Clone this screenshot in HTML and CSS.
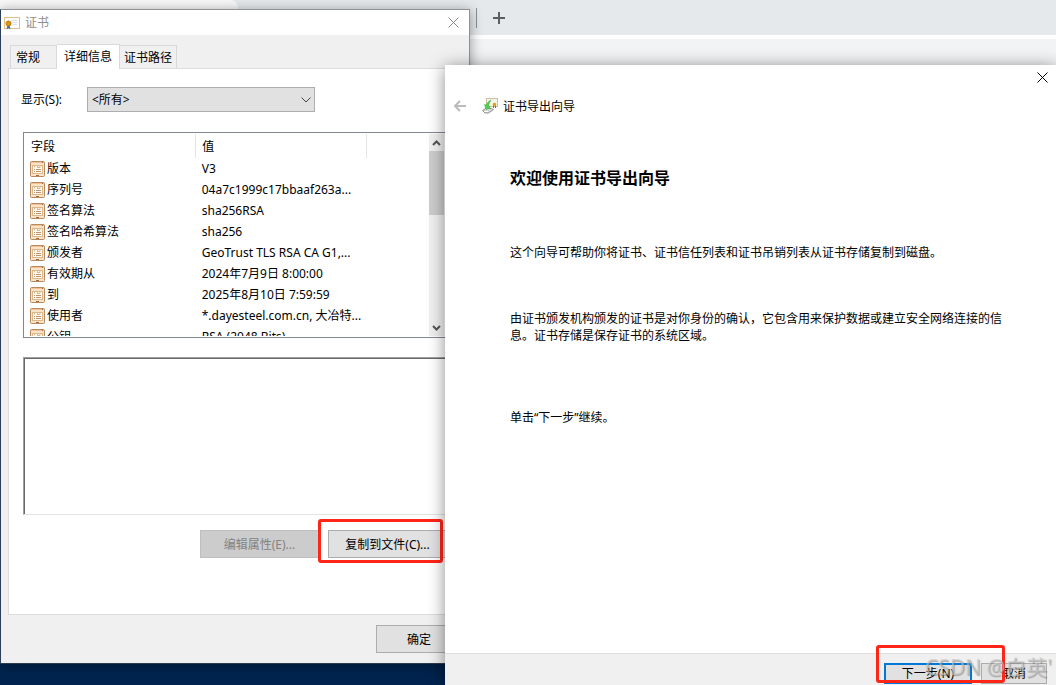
FILE: index.html
```html
<!DOCTYPE html>
<html lang="zh-CN">
<head>
    <meta charset="UTF-8">
    <meta name="viewport" content="width=device-width, initial-scale=1.0">
    <title>证书导出向导</title>
    <link rel="stylesheet" href="styles.css">
</head>
<body>
    <svg class="icon-defs" aria-hidden="true">
        <symbol id="field-icon" viewBox="0 0 15 16">
            <rect x="0.5" y="0.5" width="14" height="15" rx="1" fill="#fbe3c8" stroke="#b58a60"/>
            <path d="M1 1.5h13" stroke="#f6c096"/>
            <path d="M12 1.5h1M6 14.5h3" stroke="#a06c40"/>
            <rect x="2.5" y="4.5" width="10" height="8" fill="#fffaf3" stroke="#dbb78c"/>
            <path d="M4.5 4v2.500M7.5 4v2.500M7 6.500h3v-2" fill="none" stroke="#dbb78c"/>
            <path d="M4 8.500h1M6 8.500h5M4 10.500h1M6 10.500h5" stroke="#c09468"/>
        </symbol>
    </svg>

    <div class="desktop">
        <div class="browser">
            <div class="tab-strip">
                <div class="browser-tab"></div>
                <div class="tab-divider"></div>
                <button class="new-tab" aria-label="新标签页">
                    <svg width="12" height="12" viewBox="0 0 12 12"><path d="M6 0v12M0 6h12" stroke="#5a5f63" stroke-width="2"/></svg>
                </button>
            </div>
            <div class="toolbar"></div>
        </div>

        <!-- Certificate properties -->
        <div class="window cert-window">
            <div class="title-bar">
                <svg width="16" height="14" viewBox="0 0 16 14">
                    <rect x="0.500" y="1.500" width="15" height="11" fill="#fdfdfb" stroke="#e3bf8e"/>
                    <path d="M7 4.500h6M8 6.500h5M9 8.500h4" stroke="#dce3ec"/>
                    <path d="M3.500 9l-1 4.500 2-1.500 2 1.500-1-4.500z" fill="#2f6fd0"/>
                    <circle cx="4.500" cy="7.500" r="2.500" fill="#d99a13" stroke="#b87a08"/>
                </svg>
                <span class="title-text">证书</span>
                <button class="close" aria-label="关闭">
                    <svg width="11" height="11" viewBox="0 0 11 11"><path d="M0.500 0.500l10 10M10.500 0.500l-10 10" stroke="#8a8a8a"/></svg>
                </button>
            </div>

            <div class="tabs" role="tablist">
                <button class="tab tab-general" role="tab">常规</button>
                <button class="tab active" role="tab">详细信息</button>
                <button class="tab" role="tab">证书路径</button>
            </div>

            <div class="panel">
                <div class="filter">
                    <label for="show">显示(S):</label>
                    <div class="select-box">
                        <select id="show">
                            <option>&lt;所有&gt;</option>
                        </select>
                        <svg class="chevron" width="10" height="6" viewBox="0 0 10 6"><path d="M0.500 0.500L5 5l4.500-4.500" fill="none" stroke="#444"/></svg>
                    </div>
                </div>

                <div class="list-view">
                    <div class="list-body">
                        <table class="fields">
                            <thead>
                                <tr><th>字段</th><th>值</th></tr>
                            </thead>
                            <tbody>
                                <tr><td><svg class="field-icon"><use href="#field-icon"/></svg>版本</td><td>V3</td></tr>
                                <tr><td><svg class="field-icon"><use href="#field-icon"/></svg>序列号</td><td>04a7c1999c17bbaaf263a...</td></tr>
                                <tr><td><svg class="field-icon"><use href="#field-icon"/></svg>签名算法</td><td>sha256RSA</td></tr>
                                <tr><td><svg class="field-icon"><use href="#field-icon"/></svg>签名哈希算法</td><td>sha256</td></tr>
                                <tr><td><svg class="field-icon"><use href="#field-icon"/></svg>颁发者</td><td>GeoTrust TLS RSA CA G1,...</td></tr>
                                <tr><td><svg class="field-icon"><use href="#field-icon"/></svg>有效期从</td><td>2024年7月9日 8:00:00</td></tr>
                                <tr><td><svg class="field-icon"><use href="#field-icon"/></svg>到</td><td>2025年8月10日 7:59:59</td></tr>
                                <tr><td><svg class="field-icon"><use href="#field-icon"/></svg>使用者</td><td>*.dayesteel.com.cn, 大冶特...</td></tr>
                                <tr><td><svg class="field-icon"><use href="#field-icon"/></svg>公钥</td><td>RSA (2048 Bits)</td></tr>
                            </tbody>
                        </table>
                    </div>
                    <div class="scrollbar">
                        <svg width="9" height="6" viewBox="0 0 9 6"><path d="M1 5l3.500-3.500L8 5" fill="none" stroke="#555" stroke-width="2"/></svg>
                        <div class="track"><div class="thumb"></div></div>
                        <svg width="9" height="6" viewBox="0 0 9 6"><path d="M1 1l3.500 3.500L8 1" fill="none" stroke="#555" stroke-width="2"/></svg>
                    </div>
                </div>

                <textarea class="detail" aria-label="值" readonly></textarea>

                <div class="actions">
                    <button class="btn" disabled>编辑属性(E)...</button>
                    <button class="btn">复制到文件(C)...</button>
                </div>
            </div>

            <div class="cert-footer">
                <button class="btn btn-ok">确定</button>
            </div>
        </div>

        <div class="mark mark-copy"></div>

        <!-- Export wizard -->
        <div class="window wizard">
            <div class="wizard-bar">
                <button class="close" aria-label="关闭">
                    <svg width="11" height="11" viewBox="0 0 11 11"><path d="M0.500 0.500l10 10M10.500 0.500l-10 10" stroke="#000"/></svg>
                </button>
            </div>
            <div class="wizard-head">
                <button class="back" aria-label="上一步">
                    <svg width="12" height="12" viewBox="0 0 12 12"><path d="M12 6H1.500M6 1L1 6l5 5" fill="none" stroke="#bcbcbc" stroke-width="2"/></svg>
                </button>
                <svg width="16" height="16" viewBox="0 0 16 16">
                    <rect x="4.500" y="0.500" width="11" height="8" fill="#f6f3ea" stroke="#cdbfa8"/>
                    <path d="M11.500 7v3M13.500 7v3" stroke="#3c7bd0"/>
                    <circle cx="12.500" cy="6.500" r="1.800" fill="#e0a21c"/>
                    <path d="M0.500 12.500l3-2h6l2 1-5 3.500H3z" fill="#d3d6d5" stroke="#8f938f"/>
                    <path d="M2 13.500h4" stroke="#fff"/>
                    <path d="M9 2Q5 4 4.500 7L2.500 6.500 4 11.500 8.500 9 6.500 8Q7 5 9 2z" fill="#4fd24b" stroke="#3bb53e" stroke-width="0.500"/>
                </svg>
                <span>证书导出向导</span>
            </div>
            <div class="wizard-body">
                <h1>欢迎使用证书导出向导</h1>
                <p>这个向导可帮助你将证书、证书信任列表和证书吊销列表从证书存储复制到磁盘。</p>
                <p>由证书颁发机构颁发的证书是对你身份的确认，它包含用来保护数据或建立安全网络连接的信息。证书存储是保存证书的系统区域。</p>
                <p>单击“下一步”继续。</p>
            </div>
            <div class="wizard-footer">
                <button class="btn btn-next">下一步(N)</button>
                <button class="btn btn-cancel">取消</button>
            </div>
        </div>

        <div class="mark mark-next"></div>
        <div class="watermark">CSDN @白英'</div>
    </div>
</body>
</html>
```

FILE: styles.css
```css
* {
    margin: 0;
    padding: 0;
    box-sizing: border-box;
}

body {
    font-family: "Noto Sans", "Noto Sans CJK SC", sans-serif;
    font-size: 12px;
    line-height: 17px;
    color: #000;
    overflow: hidden;
}

button,
select,
textarea {
    font: inherit;
    color: inherit;
    border: none;
    background: none;
}

svg {
    display: block;
    flex-shrink: 0;
}

.icon-defs {
    position: absolute;
    width: 0;
    height: 0;
}

.desktop {
    position: relative;
    height: 100vh;
    background: #00244f;
    overflow: hidden;
}

/* browser behind the dialogs */
.tab-strip {
    display: flex;
    height: 35px;
    background: #e5e9ec;
}

.browser-tab {
    width: 238px;
    background: #f8f8f8;
    border-radius: 0 8px 0 0;
}

.tab-divider {
    width: 1px;
    height: 20px;
    margin: 8px 0 0 238px;
    background: #8b8f92;
}

.new-tab {
    height: 35px;
    padding: 0 16px;
}

.toolbar {
    height: 37px;
    background: #f1f3f5;
    border-top: 4px solid #fff;
}

/* windows */
.window {
    position: absolute;
    display: flex;
    flex-direction: column;
}

.cert-window {
    top: 9px;
    left: 0;
    width: 470px;
    background: #f0f0f0;
    border: 1px solid #8f9193;
    border-left-color: #2c3e5c;
    border-bottom-color: #2b3a4c;
    box-shadow: 0 2px 12px rgba(0, 0, 0, 0.4);
}

.title-bar {
    display: flex;
    align-items: center;
    height: 25px;
    padding: 0 10px 0 3px;
    background: #fff;
    color: #8e8e8e;
}

.title-text {
    flex: 1;
    padding-left: 5px;
}

.tabs {
    display: flex;
    align-items: flex-end;
    padding: 9px 9px 0;
}

.tab {
    height: 23px;
    padding: 0 4px;
    border: 1px solid #d9d9d9;
    border-bottom: none;
    background: #f0f0f0;
}

.tab + .tab {
    border-left: none;
}

.tab-general {
    padding: 0 16px 0 5px;
}

.tab.active {
    position: relative;
    height: 25px;
    margin-bottom: -1px;
    padding: 0 7px 2px;
    background: #fff;
}

.panel {
    margin: 0 7px;
    padding: 18px 14px 56px;
    border: 1px solid #dcdcdc;
    background: #fff;
}

.filter {
    display: flex;
    align-items: center;
    margin-left: -2px;
}

.filter label {
    width: 66px;
}

.select-box {
    position: relative;
    width: 228px;
}

.select-box select {
    display: block;
    width: 100%;
    height: 25px;
    padding: 0 4px;
    border: 1px solid #adadad;
    background: #e1e1e1;
    appearance: none;
}

.chevron {
    position: absolute;
    top: 10px;
    right: 4px;
}

.list-view {
    display: flex;
    height: 206px;
    margin-top: 20px;
    padding: 1px 2px 1px 1px;
    border: 1px solid #828790;
}

.list-body {
    flex: 1;
    overflow: hidden;
}

.fields {
    width: 342px;
    table-layout: fixed;
    border-collapse: collapse;
    white-space: nowrap;
}

.fields th {
    height: 24px;
    padding: 0 6px;
    border-right: 1px solid #e5e5e5;
    font-weight: normal;
    text-align: left;
}

.fields td {
    height: 21px;
    padding: 0 6px;
}

.fields td:first-child {
    display: flex;
    align-items: center;
    gap: 2px;
    padding: 0 5px;
}

.field-icon {
    width: 15px;
    height: 16px;
}

.scrollbar {
    display: flex;
    flex-direction: column;
    align-items: center;
    width: 15px;
    padding: 6px 0 5px;
    background: #f0f0f0;
}

.track {
    flex: 1;
    width: 100%;
    padding: 5px 0;
}

.thumb {
    height: 64px;
    background: #cdcdcd;
}

.detail {
    display: block;
    width: 100%;
    height: 158px;
    margin-top: 19px;
    border: 1px solid #a0a0a0;
    border-right-color: #e3e3e3;
    border-bottom-color: #e3e3e3;
    box-shadow: inset 1px 1px #696969;
    resize: none;
    outline: none;
}

.actions {
    display: flex;
    justify-content: flex-end;
    gap: 9px;
    margin-top: 15px;
}

.btn {
    width: 119px;
    height: 28px;
    border: 1px solid #adadad;
    background: #e1e1e1;
}

.btn:disabled {
    border-color: #bfbfbf;
    background: #ccc;
    color: #838383;
}

.cert-footer {
    display: flex;
    justify-content: flex-end;
    padding: 10px 7px;
}

.btn-ok {
    width: 86px;
}

/* export wizard */
.wizard {
    top: 65px;
    right: 0;
    bottom: 0;
    left: 445px;
    background: #fff;
    box-shadow: 0 2px 16px rgba(0, 0, 0, 0.45);
}

.wizard-bar {
    display: flex;
    justify-content: flex-end;
    padding: 7px 8px 13px;
}

.wizard-head {
    display: flex;
    align-items: center;
    height: 20px;
    padding-left: 9px;
    gap: 5px;
}

.back {
    margin-right: 11px;
}

.wizard-body {
    flex: 1;
    padding: 50px 49px 0 65px;
}

.wizard-body h1 {
    margin-bottom: 54px;
    font-size: 16px;
    line-height: 24px;
}

.wizard-body p {
    margin-bottom: 49px;
}

.wizard-body p + p + p {
    margin-top: 65px;
}

.wizard-footer {
    display: flex;
    justify-content: flex-end;
    gap: 9px;
    padding: 9px 9px 1px;
    border-top: 1px solid #dfdfdf;
    background: #f0f0f0;
}

.wizard-footer .btn {
    height: 21px;
}

.wizard-footer .btn-next {
    width: 88px;
    border: 2px solid #0078d7;
}

.wizard-footer .btn-cancel {
    width: 66px;
}

/* red highlights */
.mark {
    position: absolute;
    border: 3px solid #ff2517;
    border-radius: 3px;
}

.mark-copy {
    top: 519px;
    left: 318px;
    width: 125px;
    height: 44px;
}

.mark-next {
    right: 51px;
    bottom: 2px;
    width: 129px;
    height: 38px;
}

.watermark {
    position: absolute;
    right: 4px;
    bottom: 4px;
    font-size: 21px;
    line-height: 28px;
    color: rgba(200, 200, 200, 0.6);
    text-shadow: 1px 1px 1px rgba(100, 100, 100, 0.5);
}
```
